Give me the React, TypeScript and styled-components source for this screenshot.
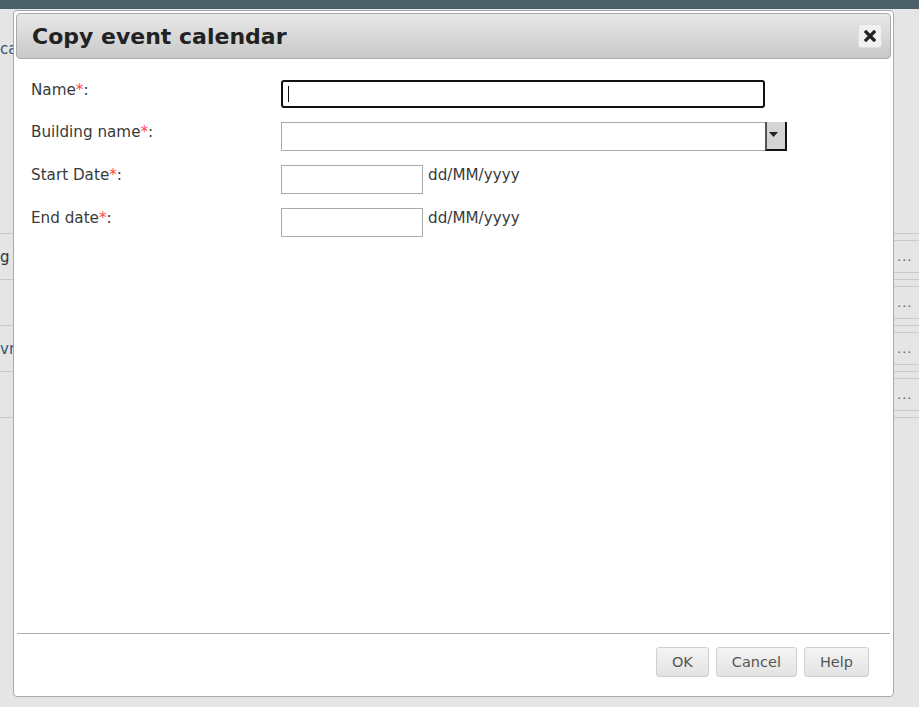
import styled, { createGlobalStyle } from "styled-components";

const GlobalStyle = createGlobalStyle`
  html, body {
    margin: 0;
    padding: 0;
    background: #e5e5e5;
    font-family: "DejaVu Sans", Verdana, sans-serif;
    color: #333;
  }
`;

const Page = styled.div`
  position: relative;
  width: 919px;
  height: 707px;
  overflow: hidden;
  background: #e5e5e5;
`;

const TopBar = styled.div`
  height: 9px;
  background: #4b5f69;
`;

const Crumb = styled.div`
  height: 224px;
  box-sizing: border-box;
  padding-top: 31px;
  font-size: 15px;
  color: #34546f;
  white-space: nowrap;
`;

const Table = styled.div`
  border-top: 1px solid #c9c9c9;
`;

const Row = styled.div`
  display: grid;
  grid-template-columns: 1fr 25px;
  height: 45px;
  border-bottom: 1px solid #c9c9c9;
`;

const NameCell = styled.div<{ $link?: boolean }>`
  display: flex;
  align-items: center;
  font-size: 15px;
  white-space: nowrap;
  color: ${(p) => (p.$link ? "#2e5878" : "#333")};
`;

const ActionCell = styled.div`
  display: flex;
  padding: 6px 0;
`;

const MoreBox = styled.div`
  flex: 1;
  display: flex;
  align-items: center;
  padding-left: 3px;
  border-top: 1px solid #c9c9c9;
  border-bottom: 1px solid #c9c9c9;
  font-size: 13px;
  letter-spacing: 1px;
  color: #59607a;
`;

const Dialog = styled.div`
  position: absolute;
  left: 13px;
  top: 10px;
  width: 881px;
  height: 687px;
  box-sizing: border-box;
  padding: 2px;
  background: #fff;
  border: 1px solid #aaa;
  border-radius: 4px;
  display: flex;
  flex-direction: column;
`;

const TitleBar = styled.div`
  height: 46px;
  box-sizing: border-box;
  display: flex;
  align-items: center;
  justify-content: space-between;
  padding: 0 8px 0 15px;
  border: 1px solid #aaa;
  border-radius: 4px;
  background: linear-gradient(to bottom, #e8e8e8 0%, #c9c9c9 100%);
`;

const Title = styled.h1`
  margin: 0;
  font-size: 22px;
  font-weight: bold;
  color: #222;
`;

const CloseButton = styled.button`
  width: 24px;
  height: 24px;
  padding: 0;
  display: flex;
  align-items: center;
  justify-content: center;
  background: #f1f1f1;
  border: 1px solid #dcdcdc;
  border-radius: 3px;
`;

const Body = styled.div`
  flex: 1;
  padding: 21px 15px 0;
  display: grid;
  grid-template-columns: 250px 1fr;
  grid-auto-rows: min-content;
  row-gap: 14px;
`;

const Label = styled.label`
  font-size: 15.2px;
  line-height: 20px;
  color: #3a3a3a;
`;

const Required = styled.span`
  color: #f44;
`;

const Field = styled.div`
  display: flex;
  align-items: flex-start;
  gap: 5px;
`;

const TextBox = styled.div<{ $width: number; $focused?: boolean }>`
  width: ${(p) => p.$width}px;
  height: ${(p) => (p.$focused ? 28 : 29)}px;
  box-sizing: border-box;
  display: flex;
  align-items: center;
  padding-left: 5px;
  background: #fff;
  border: ${(p) => (p.$focused ? "2px solid #111" : "1px solid #aaa")};
  border-radius: ${(p) => (p.$focused ? "3px" : "0")};
`;

const Caret = styled.span`
  width: 1px;
  height: 16px;
  background: #111;
`;

const Select = styled.div`
  width: 506px;
  height: 29px;
  box-sizing: border-box;
  display: flex;
  justify-content: flex-end;
  border: 1px solid #aaa;
  border-right: none;
  background: #fff;
`;

const DropButton = styled.div`
  width: 22px;
  margin: -1px 0;
  box-sizing: border-box;
  display: flex;
  align-items: flex-start;
  padding: 10px 0 0 2px;
  background: #d4d4d4;
  border-left: 2px solid #555;
  border-right: 2px solid #111;
  border-bottom: 2px solid #111;
`;

const Hint = styled.span`
  font-size: 15.2px;
  line-height: 20px;
  color: #3a3a3a;
`;

const Footer = styled.div`
  margin: 0 1px;
  border-top: 1px solid #aaa;
  display: flex;
  justify-content: flex-end;
  gap: 7px;
  padding: 13px 21px 17px;
`;

const Button = styled.button`
  height: 30px;
  padding: 0 15px;
  font-family: "DejaVu Sans", Verdana, sans-serif;
  font-size: 14.5px;
  color: #555;
  background: linear-gradient(to bottom, #f4f4f4 0%, #e3e3e3 100%);
  border: 1px solid #cfcfcf;
  border-radius: 3px;
`;

const rows = [
  { text: "g T", link: false },
  { text: "", link: false },
  { text: "vr", link: true },
  { text: "", link: false },
];

const App = () => {
  return (
    <>
      <GlobalStyle />
      <Page>
        <TopBar />
        <Crumb>ca</Crumb>
        <Table>
          {rows.map((r, i) => (
            <Row key={i}>
              <NameCell $link={r.link}>{r.text}</NameCell>
              <ActionCell>
                <MoreBox>...</MoreBox>
              </ActionCell>
            </Row>
          ))}
        </Table>

        <Dialog role="dialog">
          <TitleBar>
            <Title>Copy event calendar</Title>
            <CloseButton aria-label="Close">
              <svg width="12" height="12" viewBox="0 0 12 12">
                <path d="M2 2 L10 10 M10 2 L2 10" stroke="#222" strokeWidth="3.2" strokeLinecap="square" />
              </svg>
            </CloseButton>
          </TitleBar>

          <Body>
            <Label>
              Name<Required>*</Required>:
            </Label>
            <Field>
              <TextBox $width={484} $focused>
                <Caret />
              </TextBox>
            </Field>

            <Label>
              Building name<Required>*</Required>:
            </Label>
            <Field>
              <Select>
                <DropButton>
                  <svg width="9" height="5" viewBox="0 0 9 5">
                    <path d="M0 0 H9 L4.5 5 Z" fill="#222" />
                  </svg>
                </DropButton>
              </Select>
            </Field>

            <Label>
              Start Date<Required>*</Required>:
            </Label>
            <Field>
              <TextBox $width={142} />
              <Hint>dd/MM/yyyy</Hint>
            </Field>

            <Label>
              End date<Required>*</Required>:
            </Label>
            <Field>
              <TextBox $width={142} />
              <Hint>dd/MM/yyyy</Hint>
            </Field>
          </Body>

          <Footer>
            <Button>OK</Button>
            <Button>Cancel</Button>
            <Button>Help</Button>
          </Footer>
        </Dialog>
      </Page>
    </>
  );
};

export default App;
